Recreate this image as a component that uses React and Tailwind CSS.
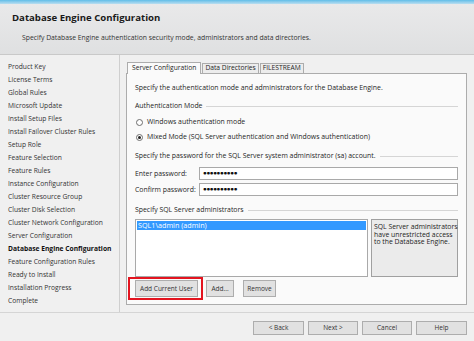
const NAV_ITEMS = [
  'Product Key',
  'License Terms',
  'Global Rules',
  'Microsoft Update',
  'Install Setup Files',
  'Install Failover Cluster Rules',
  'Setup Role',
  'Feature Selection',
  'Feature Rules',
  'Instance Configuration',
  'Cluster Resource Group',
  'Cluster Disk Selection',
  'Cluster Network Configuration',
  'Server Configuration',
  'Database Engine Configuration',
  'Feature Configuration Rules',
  'Ready to Install',
  'Installation Progress',
  'Complete',
];

const ACTIVE = 'Database Engine Configuration';

function Button({ children, className = '' }) {
  return (
    <button
      className={
        'flex items-center justify-center border border-[#adadad] bg-[#e1e1e1] text-[6.5px] text-[#333] ' +
        className
      }
    >
      {children}
    </button>
  );
}

// label followed by a thin rule, like a WinForms group header
function GroupHeader({ children, className = '' }) {
  return (
    <div className={'flex items-center gap-[4px] ' + className}>
      <span className="leading-[10px] whitespace-nowrap">{children}</span>
      <div className="h-px flex-1 bg-[#d5d5d5]" />
    </div>
  );
}

function Radio({ checked, label, className = '' }) {
  return (
    <div className={'flex items-center gap-[4px] pl-[1px] ' + className}>
      <span className="flex h-[7px] w-[7px] items-center justify-center rounded-full border border-[#6d6d6d] bg-white">
        {checked && <span className="h-[3px] w-[3px] rounded-full bg-[#222]" />}
      </span>
      <span className="leading-[10px]">{label}</span>
    </div>
  );
}

function PasswordRow({ label, className = '' }) {
  return (
    <div className={'flex items-center ' + className}>
      <span className="w-[64px] leading-[10px]">{label}</span>
      <div className="flex h-[13px] flex-1 items-center border border-[#a9a9a9] bg-white pl-[3px] text-[6.3px] leading-none tracking-[-0.4px] text-[#111]">
        ●●●●●●●●●●
      </div>
    </div>
  );
}

export default function App() {
  return (
    <div className="flex h-[341px] w-[474px] flex-col overflow-hidden bg-[#f0f0f0] font-['Open_Sans','Noto_Sans',sans-serif] text-[6.7px] text-[#1e1e1e]">
      <div className="h-[4px] bg-gradient-to-b from-[#5fbde8] to-[#b9def0]" />

      <header className="h-[51px] border-b border-[#c9c9c9] bg-gradient-to-b from-[#e9e9ea] to-[#dfe0e1] pl-[12px] pt-[7px]">
        <h1 className="text-[9.6px] font-bold leading-[13px] text-[#1a1a1a]">
          Database Engine Configuration
        </h1>
        <p className="mt-[9px] pl-[10px] text-[6.8px] leading-[9px] text-[#333]">
          Specify Database Engine authentication security mode, administrators and data directories.
        </p>
      </header>

      <div className="flex h-[257px]">
        <nav className="w-[120px] border-r border-[#cfcfcf] pl-[8px] pt-[5px] text-[#333]">
          {NAV_ITEMS.map((item) => (
            <div
              key={item}
              className={
                'h-[13px] leading-[13px] whitespace-nowrap ' +
                (item === ACTIVE ? 'font-bold text-[#111]' : '')
              }
            >
              {item}
            </div>
          ))}
        </nav>

        <main className="flex flex-1 flex-col pl-[6px] pr-[7px] pt-[7px]">
          <div className="flex items-end gap-px">
            <div className="relative z-10 -mb-px ml-px flex h-[12px] items-center border border-b-0 border-[#acacac] bg-[#fafafa] px-[4px]">
              Server Configuration
            </div>
            <div className="flex h-[10px] items-center border border-b-0 border-[#acacac] bg-[#ececec] px-[2px]">
              Data Directories
            </div>
            <div className="flex h-[10px] items-center border border-b-0 border-[#acacac] bg-[#ececec] px-[2px]">
              FILESTREAM
            </div>
          </div>

          <section className="flex h-[232px] flex-col border border-[#acacac] bg-[#fafafa] pl-[8px] pr-[8px] pt-[9px] text-[6.9px]">
            <p className="leading-[10px]">
              Specify the authentication mode and administrators for the Database Engine.
            </p>

            <GroupHeader className="mt-[8px]">Authentication Mode</GroupHeader>
            <Radio className="mt-[6px]" label="Windows authentication mode" />
            <Radio
              className="mt-[5px]"
              checked
              label="Mixed Mode (SQL Server authentication and Windows authentication)"
            />

            <GroupHeader className="mt-[9px]">
              Specify the password for the SQL Server system administrator (sa) account.
            </GroupHeader>
            <PasswordRow className="mt-[6px]" label="Enter password:" />
            <PasswordRow className="mt-[3px]" label="Confirm password:" />

            <GroupHeader className="mt-[9px]">Specify SQL Server administrators</GroupHeader>

            <div className="mt-[4px] flex h-[58px] gap-[3px]">
              <div className="flex-1 border border-[#a9a9a9] bg-white p-px">
                <div className="h-[9px] bg-[#3399ff] pl-[1px] text-[7.2px] leading-[9px] text-white">
                  SQL1\admin (admin)
                </div>
              </div>
              <div className="w-[87px] border border-[#a0a0a0] bg-[#ebebeb] pl-[2px] pt-[3px] text-[6.85px] leading-[7.7px] whitespace-nowrap">
                SQL Server administrators
                <br />
                have unrestricted access
                <br />
                to the Database Engine.
              </div>
            </div>

            <div className="mt-[3px] flex">
              <Button className="relative h-[17px] w-[63px]">
                Add Current User
                <span className="absolute -bottom-[4px] -left-[8px] -right-[6px] -top-[4px] border-2 border-[#e3141f]" />
              </Button>
              <Button className="ml-[8px] h-[17px] w-[28px]">Add...</Button>
              <Button className="ml-[9px] h-[17px] w-[33px]">Remove</Button>
            </div>
          </section>
        </main>
      </div>

      <footer className="flex flex-1 justify-end gap-[4px] border-t border-[#d5d5d5] pr-[7px] pt-[8px]">
        <Button className="h-[14px] w-[51px]">&lt; Back</Button>
        <Button className="h-[14px] w-[50px]">Next &gt;</Button>
        <Button className="h-[14px] w-[50px]">Cancel</Button>
        <Button className="h-[14px] w-[51px]">Help</Button>
      </footer>
    </div>
  );
}
